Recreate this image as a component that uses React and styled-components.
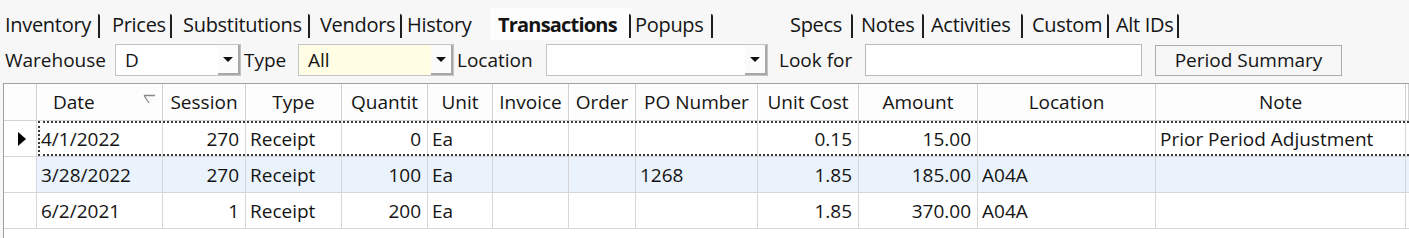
import React from 'react'
import styled, { createGlobalStyle } from 'styled-components'

const Global = createGlobalStyle`
  body {
    margin:0;
    background:#f7f7f7;
  }
`

const Page = styled.div`
  width:1409px;
  height:238px;
  overflow:hidden;
  background:#f7f7f7;
  font-family:"Open Sans", "Noto Sans", sans-serif;
  font-size:19px;
  color:#141414;
`

const TabBar = styled.div`
  display:flex;
  align-items:stretch;
  height:32px;
  margin-top:8px;
  padding-left:3px;
  font-size:20px;
`
const Tab = styled.div`
  width:${({ $w }) => $w}px;
  margin-left:${({ $gap }) => $gap || 0}px;
  display:flex;
  align-items:center;
  justify-content:space-between;
  padding-left:${({ $pad }) => $pad}px;
  box-sizing:border-box;
  font-weight:${({ $active }) => ($active ? 700 : 400)};
  background:${({ $active }) => ($active ? '#fdfdfd' : 'transparent')};
  letter-spacing:${({ $active }) => ($active ? '-0.8px' : '-0.3px')};
  white-space:nowrap;
`
const TabSep = styled.span`
  flex-shrink:0;
  width:2px;
  height:24px;
  margin-top:4px;
  margin-left:3px;
  background:#1e1e1e;
  border-top-right-radius:2px;
`

const FilterRow = styled.div`
  display:flex;
  align-items:center;
  height:32px;
  margin-top:4px;
  padding-left:3px;
`
const Label = styled.div`
  width:${({ $w }) => $w}px;
  padding-left:${({ $pad }) => $pad || 0}px;
  box-sizing:border-box;
  white-space:nowrap;
`
const Combo = styled.div`
  width:${({ $w }) => $w}px;
  height:32px;
  box-sizing:border-box;
  display:flex;
  border:1px solid #c4c4c4;
  background:#fff;
`
const ComboValue = styled.div`
  flex:1;
  display:flex;
  align-items:center;
  padding-left:9px;
  background:${({ $bg }) => $bg || '#fff'};
`
const ArrowBox = styled.div`
  width:20px;
  display:flex;
  align-items:center;
  justify-content:center;
  background:#fbfbfb;
  border-right:2px solid #a8a8a8;
  border-bottom:2px solid #a8a8a8;
`
const Arrow = styled.span`
  width:0;
  height:0;
  border-left:5px solid transparent;
  border-right:5px solid transparent;
  border-top:5px solid #111;
  margin-top:1px;
`
const TextBox = styled.div`
  width:${({ $w }) => $w}px;
  height:32px;
  box-sizing:border-box;
  border:1px solid #b9b9b9;
  background:#fff;
`
const Button = styled.div`
  width:187px;
  height:31px;
  margin-left:13px;
  box-sizing:border-box;
  display:flex;
  align-items:center;
  justify-content:center;
  border:1px solid #adadad;
  background:#f6f6f6;
`

const cols = '33px 126px 83px 96px 86px 65px 76px 67px 122px 101px 119px 178px 250px 1fr'

const Grid = styled.div`
  margin-top:7px;
  margin-left:3px;
  border-left:1px solid #a0a0a0;
  border-top:1px solid #a0a0a0;
  background:#fff;
  height:154px;
`
const Row = styled.div`
  position:relative;
  display:grid;
  grid-template-columns:${cols};
  height:${({ $h }) => $h}px;
  background:${({ $bg }) => $bg || '#fff'};
  ${({ $focus }) =>
    $focus &&
    `&::after{
      content:'';
      position:absolute;
      left:34px; right:0; top:0; bottom:1px;
      border:2px dotted #3a3a3a;
      border-right:none;
      pointer-events:none;
    }`}
`
const HeadCell = styled.div`
  position:relative;
  display:flex;
  align-items:center;
  justify-content:${({ $left }) => ($left ? 'flex-start' : 'center')};
  padding-left:${({ $left }) => ($left ? '16px' : '0')};
  border-right:1px solid #d2d2d2;
  border-bottom:1px solid #d2d2d2;
  background:#fdfdfd;
  white-space:nowrap;
  overflow:hidden;
`
const Cell = styled.div`
  display:flex;
  align-items:center;
  justify-content:${({ $right }) => ($right ? 'flex-end' : 'flex-start')};
  padding:0 6px 0 4px;
  border-right:1px solid #d7d7d7;
  border-bottom:1px solid #d7d7d7;
  background:${({ $bg }) => $bg || 'transparent'};
  white-space:nowrap;
  overflow:hidden;
`
const Selector = styled(Cell)`
  justify-content:center;
  padding:0;
  background:#fff;
`
const RowArrow = styled.span`
  width:0;
  height:0;
  border-top:7px solid transparent;
  border-bottom:7px solid transparent;
  border-left:8px solid #000;
  margin-left:4px;
`
const SortMark = styled.svg`
  position:absolute;
  right:6px;
  top:9px;
`

const tabsLeft = [
  { t: 'Inventory', w: 97, pad: 2, sep: true },
  { t: 'Prices', w: 72, pad: 12, sep: true },
  { t: 'Substitutions', w: 138, pad: 11, sep: true },
  { t: 'Vendors', w: 92, pad: 10, sep: true },
  { t: 'History', w: 88, pad: 5, sep: false },
  { t: 'Transactions', w: 141, pad: 8, sep: true, active: true },
  { t: 'Popups', w: 82, pad: 4, sep: true },
]
const tabsRight = [
  { t: 'Specs', w: 71, pad: 8, sep: true, gap: 69 },
  { t: 'Notes', w: 71, pad: 8, sep: true },
  { t: 'Activities', w: 99, pad: 7, sep: true },
  { t: 'Custom', w: 86, pad: 9, sep: true },
  { t: 'Alt IDs', w: 70, pad: 7, sep: true },
]

const headers = ['Session', 'Type', 'Quantit', 'Unit', 'Invoice', 'Order', 'PO Number', 'Unit Cost', 'Amount', 'Location', 'Note']
const rightCols = [1, 3, 8, 9]

const rows = [
  { cur: true, v: ['4/1/2022', '270', 'Receipt', '0', 'Ea', '', '', '', '0.15', '15.00', '', 'Prior Period Adjustment'] },
  { bg: '#eaf3fb', v: ['3/28/2022', '270', 'Receipt', '100', 'Ea', '', '', '1268', '1.85', '185.00', 'A04A', ''] },
  { v: ['6/2/2021', '1', 'Receipt', '200', 'Ea', '', '', '', '1.85', '370.00', 'A04A', ''] },
]

const App = () => {
  return (
    <Page>
      <Global />
      <TabBar>
        {[...tabsLeft, ...tabsRight].map((tab) => (
          <Tab key={tab.t} $w={tab.w} $pad={tab.pad} $gap={tab.gap} $active={tab.active}>
            <span>{tab.t}</span>
            {tab.sep && <TabSep />}
          </Tab>
        ))}
      </TabBar>

      <FilterRow>
        <Label $w={112} $pad={2}>Warehouse</Label>
        <Combo $w={126}>
          <ComboValue>D</ComboValue>
          <ArrowBox><Arrow /></ArrowBox>
        </Combo>
        <Label $w={57} $pad={3}>Type</Label>
        <Combo $w={156}>
          <ComboValue $bg="#fffde3">All</ComboValue>
          <ArrowBox><Arrow /></ArrowBox>
        </Combo>
        <Label $w={92} $pad={3}>Location</Label>
        <Combo $w={222}>
          <ComboValue />
          <ArrowBox><Arrow /></ArrowBox>
        </Combo>
        <Label $w={97} $pad={11}>Look for</Label>
        <TextBox $w={277} />
        <Button>Period Summary</Button>
      </FilterRow>

      <Grid>
        <Row $h={37}>
          <HeadCell />
          <HeadCell $left>
            Date
            <SortMark width="14" height="12" viewBox="0 0 14 12">
              <path d="M2 2.5 H13 M2 2.5 L7 10" stroke="#8a8a8a" strokeWidth="1.3" fill="none" />
            </SortMark>
          </HeadCell>
          {headers.map((h) => (
            <HeadCell key={h}>{h}</HeadCell>
          ))}
          <HeadCell />
        </Row>
        {rows.map((r, i) => (
          <Row key={i} $h={36} $focus={r.cur}>
            <Selector>{r.cur && <RowArrow />}</Selector>
            {r.v.map((val, j) => (
              <Cell key={j} $right={rightCols.includes(j)} $bg={r.bg}>{val}</Cell>
            ))}
            <Cell $bg={r.bg} />
          </Row>
        ))}
      </Grid>
    </Page>
  )
}

export default App
